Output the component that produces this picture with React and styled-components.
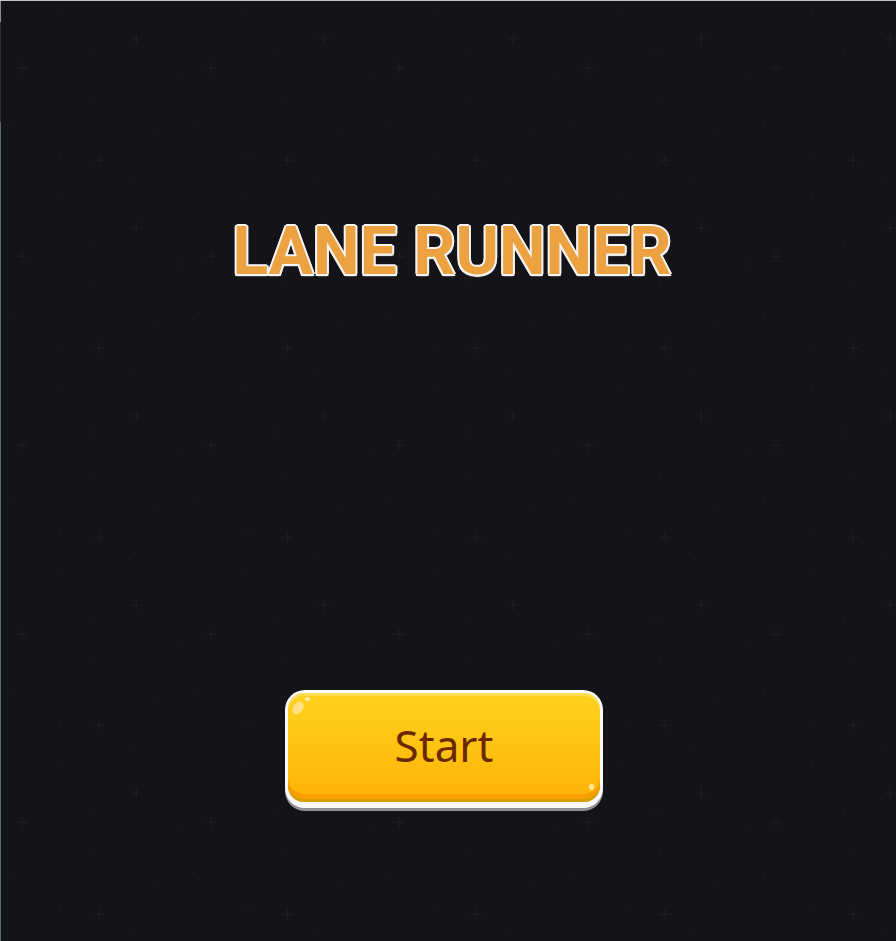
import React from "react";
import styled, { createGlobalStyle } from "styled-components";

//........Background stars (vector tile)...............
const starTile = `<svg xmlns='http://www.w3.org/2000/svg' width='188.6' height='188.6'>
<g stroke='#1f1e23' stroke-width='1' stroke-linecap='round'>
<path d='M99 155v10M94 160h10'/>
<path d='M136 34v10M131 39h10'/>
<path d='M22 63v10M17 68h10'/>
</g>
<g fill='#1d1c21'>
<circle cx='60' cy='156' r='1'/>
<circle cx='128.6' cy='181.4' r='1'/>
<circle cx='57.7' cy='9.8' r='1'/>
<circle cx='89.7' cy='54.8' r='1'/>
<circle cx='180' cy='75.8' r='1'/>
<circle cx='94' cy='96' r='1'/>
<circle cx='9.7' cy='124.8' r='1'/>
<circle cx='154' cy='133.5' r='1'/>
</g>
</svg>`;

const starUrl = `url("data:image/svg+xml,${encodeURIComponent(starTile)}")`;

const GlobalStyle = createGlobalStyle`
  html, body {
    margin: 0;
    padding: 0;
    background: #141317;
  }
  #root {
    min-height: 100vh;
  }
`;

//........Custome this page...............
const Screen = styled.main`
  box-sizing: border-box;
  min-height: 100vh;
  display: flex;
  flex-direction: column;
  align-items: center;
  padding-top: 219px;
  background:
    linear-gradient(#c6c6c6, #c6c6c6) 0 0 / 100% 1px no-repeat,
    linear-gradient(
        to bottom,
        #8d8d8f 0 22px,
        #2f2f33 22px 122px,
        #5b6a70 122px
      )
      0 0 / 1px 100% no-repeat,
    ${starUrl} 0 0 / 188.6px 188.6px repeat,
    #141317;
`;

const Title = styled.h1`
  margin: 0 0 0 8px;
  font-family: Roboto, "Liberation Sans", sans-serif;
  font-weight: 700;
  font-size: 66px;
  line-height: 1;
  letter-spacing: 0;
  color: #eca240;
  text-shadow:
    2px 0 0 #f4f4f4, -2px 0 0 #f4f4f4, 0 2px 0 #f4f4f4, 0 -2px 0 #f4f4f4,
    1.5px 1.5px 0 #f4f4f4, -1.5px 1.5px 0 #f4f4f4, 1.5px -1.5px 0 #f4f4f4,
    -1.5px -1.5px 0 #f4f4f4, 0 3px 1px rgba(120, 120, 120, 0.5);
`;

const StartButton = styled.button`
  position: relative;
  box-sizing: border-box;
  margin: 405px 0 0 -8px;
  width: 318px;
  height: 118px;
  padding: 3px 3px 6px;
  border: none;
  border-radius: 20px;
  background: #fbfbfb;
  box-shadow: 0 3px 0 #8f9094;
  cursor: pointer;
  display: flex;
`;

const Face = styled.span`
  position: relative;
  flex: 1;
  display: flex;
  align-items: center;
  justify-content: center;
  padding-bottom: 6px;
  border-radius: 16px;
  background: linear-gradient(to bottom, #ffd21f 0%, #ffc212 50%, #ffb20a 100%);
  box-shadow:
    inset 0 -3px 0 #d6a000,
    inset 0 -8px 0 #f99f02,
    inset 0 3px 0 rgba(255, 226, 110, 0.7);
  font-family: "Noto Sans", "Open Sans", sans-serif;
  font-size: 44px;
  font-weight: 400;
  color: #6a2800;

  &::before {
    content: "";
    position: absolute;
    left: 5px;
    top: 8px;
    width: 10px;
    height: 14px;
    border-radius: 50%;
    background: rgba(255, 236, 180, 0.7);
    transform: rotate(35deg);
  }
  &::after {
    content: "";
    position: absolute;
    left: 17px;
    top: 4px;
    width: 5px;
    height: 4px;
    border-radius: 50%;
    background: rgba(255, 244, 200, 0.85);
  }
`;

const Glint = styled.span`
  position: absolute;
  right: 6px;
  bottom: 12px;
  width: 5px;
  height: 6px;
  border-radius: 50%;
  background: rgba(255, 240, 180, 0.85);
`;

//.....JSX code...........................
function App() {
  return (
    <>
      <GlobalStyle />
      <Screen>
        <Title>LANE RUNNER</Title>
        <StartButton type="button">
          <Face>
            Start
            <Glint />
          </Face>
        </StartButton>
      </Screen>
    </>
  );
}

export default App;
